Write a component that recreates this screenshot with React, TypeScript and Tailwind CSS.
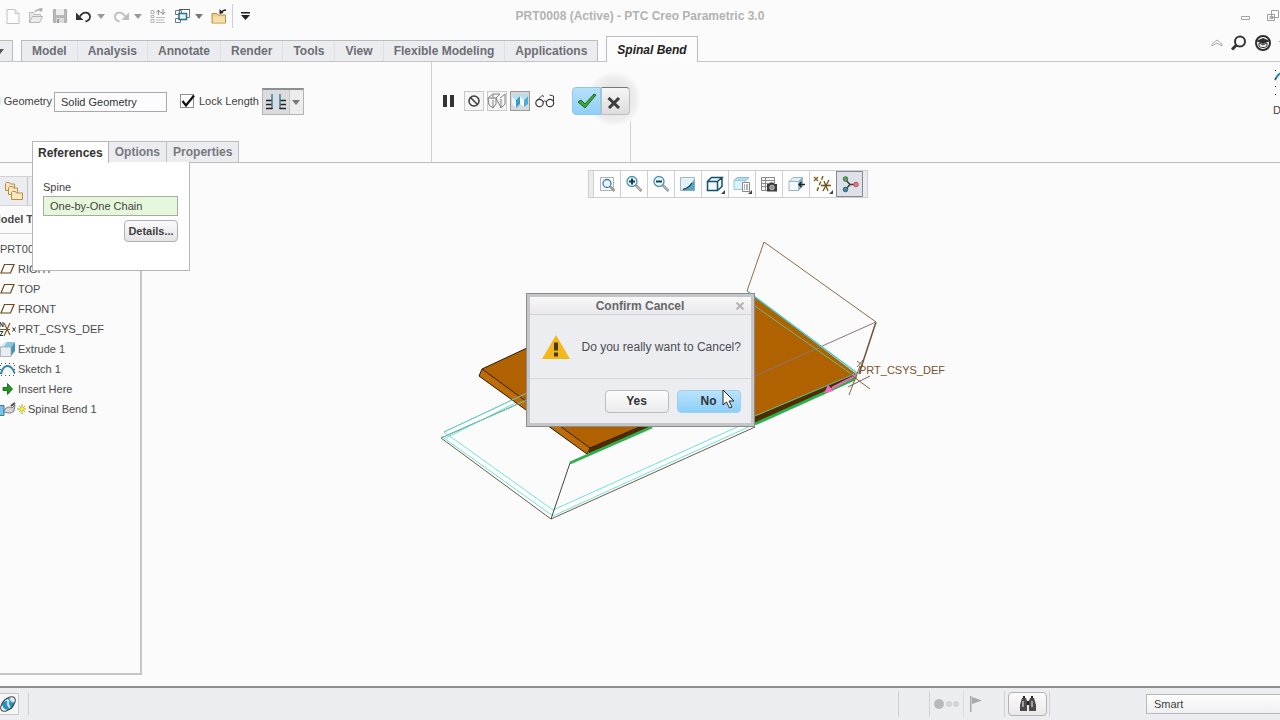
import React from 'react';
import clsx from 'clsx';

const Caret = ({ className = 'text-[#9a9a9a]' }: { className?: string }) => (
  <svg viewBox="0 0 8 5" className={clsx('w-2 h-[5px] shrink-0', className)}>
    <path d="M0 0h8L4 5z" fill="currentColor" />
  </svg>
);

const Icon = ({ children, className = 'w-4 h-4' }: { children: React.ReactNode; className?: string }) => (
  <svg viewBox="0 0 16 16" fill="none" className={clsx('shrink-0', className)}>
    {children}
  </svg>
);

const NewIcon = () => (
  <Icon>
    <path d="M3 1.500h8l4 4v10H3z" fill="#fdfdfd" stroke="#c2c2c2" />
    <path d="M11 1.500v4h4" stroke="#c2c2c2" />
  </Icon>
);

const OpenIcon = () => (
  <Icon>
    <path d="M1.500 14.500v-10h4l1 2h6v2" fill="#e6e6e6" stroke="#bdbdbd" />
    <path d="M1.500 14.500l3-6h10l-3 6z" fill="#ececec" stroke="#b5b5b5" />
    <path d="M7 4c1-2 3-2.500 5-2" stroke="#ababab" strokeWidth="1.500" />
    <path d="M11 0l4 .500-2 4z" fill="#ababab" />
  </Icon>
);

const SaveIcon = () => (
  <Icon>
    <path d="M1.500 1.500h13v13h-13z" fill="#b8b8b8" stroke="#adadad" />
    <path d="M4 1h8v6H4z" fill="#ededed" />
    <path d="M4 10h8v5H4z" fill="#dcdcdc" />
    <path d="M5 11h2v4H5z" fill="#9d9d9d" />
  </Icon>
);

const UndoIcon = ({ redo }: { redo?: boolean }) => (
  <Icon className={clsx('w-4 h-4', redo ? '-scale-x-100 text-[#bdbdbd]' : 'text-[#333]')}>
    <path d="M4 8.500C6.500 3.500 13 3.500 14 8c.500 3-1.500 5-4.500 5.500" stroke="currentColor" strokeWidth="1.800" />
    <path d="M0 4.500v7.500h7.500z" fill="currentColor" />
  </Icon>
);

const RegenIcon = () => (
  <Icon>
    <path d="M1 2.500h3v3H1zM1 7.500h3v2H1zM1 11.500h3v3H1z" stroke="#b5b5b5" />
    <path d="M6 9.500h9M6 12h8M6 14.500h9" stroke="#bcbcbc" />
    <path d="M8.500 7V2.500M6.500 4.500l2-2.500 2 2.500M13 1v5M11 4l2 2.500L15 4" stroke="#8e8e8e" />
  </Icon>
);

const WindowsIcon = () => (
  <Icon>
    <path d="M5.500 1.500h10v8h-10zM1.500 2.500h6v4h-6zM1.500 10.500h5v4h-5z" fill="#fff" stroke="#6b7780" />
    <path d="M5 1.500h11" stroke="#4d5a63" />
    <path d="M5 5.500h7.500v6H5z" fill="#e9f4fa" stroke="#1f7396" strokeWidth="1.500" />
  </Icon>
);

const CloseFolderIcon = () => (
  <Icon>
    <path d="M1 5.500h5l1 1.500h7.500v8H1z" fill="#f0d08a" stroke="#b48f4b" />
    <path d="M2 8.500h12v6H2z" fill="#f8dfa6" />
    <path d="M10.500 4.500c1-2 2.500-2.500 4.500-2.500" stroke="#222" strokeWidth="1.500" />
    <path d="M8.500 1v5l4-1z" fill="#222" />
  </Icon>
);

const FoldersIcon = () => (
  <svg viewBox="0 0 20 20" fill="#fae8bc" stroke="#b48f4b" className="w-5 h-5">
    <path d="M1.500 9.500v-7l1-1h3l1 1.500h4v6.500z" />
    <path d="M4.500 13.500v-7l1-1h3l1 1.500h4v6.500z" />
    <path d="M7.500 18.500v-7l1-1h3l1 1.500h6v6.500z" />
  </svg>
);

const PlaneIcon = () => (
  <Icon>
    <path d="M4.500 3.500H14L10.500 12H1z" stroke="#6b4a1c" strokeWidth="1.200" />
  </Icon>
);

const CsysIcon = () => (
  <Icon>
    <path d="M0 8.500h10M4 2l6 12M10 2L4 15" stroke="#7a5a2a" strokeWidth="1.200" />
    <path d="M0 6V1l3 5V1M0 10.500h3l-3 4h3M12.500 6.500l3 4M15.500 6.500l-3 4" stroke="#333" />
  </Icon>
);

const ExtrudeIcon = () => (
  <Icon>
    <path d="M0 6l5-5h10l-4 5z" fill="#cfe7f4" />
    <path d="M11 6l4-5v9l-4 5z" fill="#3f95bf" />
    <path d="M7 1h8l-4 5H4z" fill="#8cc5df" />
    <path d="M.500 6h10.500v9.500H.500z" fill="#e9eef1" stroke="#9aa7ae" strokeWidth=".800" />
  </Icon>
);

const SketchIcon = () => (
  <Icon>
    <path d="M1 13C3 3 11 2 14.500 12" stroke="#2b84b4" strokeWidth="2" />
    <path d="M1 2.500h14M1 14.500h14M.500 4v10M14.500 4v10" stroke="#555" strokeDasharray="1 3" />
  </Icon>
);

const InsertIcon = () => (
  <Icon>
    <path d="M3 6.500h4.500v-4l5 5.500-5 5.500v-4H3z" fill="#1d9a1d" stroke="#0d5e0d" strokeWidth=".800" />
  </Icon>
);

const BendIcon = () => (
  <svg viewBox="0 0 26 16" fill="none" className="w-[26px] h-4 shrink-0">
    <path d="M0 4.500h4v10H0" fill="#7cc1e4" stroke="#2b7fa8" />
    <path d="M4 11c1-5 5-6 8-4l3-3-1 6c-3 3-6 2-10 1z" fill="#d5d5d5" stroke="#777" />
    <path d="M11 5l4-3" stroke="#444" strokeWidth="2" />
    <path d="M22 3v10M17 8h10M19 5l6 6M25 5l-6 6" stroke="#b3a800" />
    <path d="M20.500 6.500h3v3h-3z" fill="#ffee20" />
  </svg>
);

const ribbonTabs = ['Model', 'Analysis', 'Annotate', 'Render', 'Tools', 'View', 'Flexible Modeling', 'Applications'];

const treeItems = [
  { label: 'RIGHT', icon: <PlaneIcon /> },
  { label: 'TOP', icon: <PlaneIcon /> },
  { label: 'FRONT', icon: <PlaneIcon /> },
  { label: 'PRT_CSYS_DEF', icon: <CsysIcon /> },
  { label: 'Extrude 1', icon: <ExtrudeIcon /> },
  { label: 'Sketch 1', icon: <SketchIcon /> },
  { label: 'Insert Here', icon: <InsertIcon /> },
  { label: 'Spinal Bend 1', icon: <BendIcon /> },
];

const Corner = () => <path d="M20 16v4h-4z" fill="#444" />;

const viewTools = [
  {
    name: 'Refit',
    icon: (
      <>
        <path d="M3.500 3.500h13v13h-13z" stroke="#a9b4ba" />
        <circle cx="10" cy="9.500" r="4" fill="#e8f4fa" stroke="#3b7f9f" strokeWidth="1.300" />
        <path d="M13 12.500l4.500 4.500" stroke="#9a9a9a" strokeWidth="2.500" />
      </>
    ),
  },
  {
    name: 'Zoom In',
    icon: (
      <>
        <circle cx="8" cy="7.500" r="5" fill="#eef7fb" stroke="#4d92b3" strokeWidth="1.300" />
        <path d="M5 7.500h6M8 4.500v6" stroke="#0f3f58" strokeWidth="2" />
        <path d="M12 11.500l5.500 5.500" stroke="#8b8b8b" strokeWidth="2.500" />
        <path d="M12.500 12l4.500 4.500" stroke="#e4e4e4" />
      </>
    ),
  },
  {
    name: 'Zoom Out',
    icon: (
      <>
        <circle cx="8" cy="7.500" r="5" fill="#eef7fb" stroke="#4d92b3" strokeWidth="1.300" />
        <path d="M5 7.500h6" stroke="#0f3f58" strokeWidth="2" />
        <path d="M12 11.500l5.500 5.500" stroke="#8b8b8b" strokeWidth="2.500" />
        <path d="M12.500 12l4.500 4.500" stroke="#e4e4e4" />
      </>
    ),
  },
  {
    name: 'Repaint',
    icon: (
      <>
        <path d="M2.500 3.500h14v13h-14z" fill="#d4e8f2" stroke="#a7b7bf" />
        <path d="M16.500 4v12.500H4c7-2 10-6 12.500-12.500z" fill="#5ba3c2" />
        <path d="M5 15.500c4-1 7-3 9-7" stroke="#173d4e" strokeWidth="1.500" />
        <path d="M3 4h13.500C14 9 10 13 3 15z" fill="#e2f0f7" />
      </>
    ),
  },
  {
    name: 'Display Style',
    icon: (
      <>
        <path d="M2.500 7.500h10v9h-10zM2.500 7.500l4-4h10.500l-4.500 4M17 3.500v9l-4.500 4" fill="#eff8fc" stroke="#17506b" strokeWidth="1.500" />
        <Corner />
      </>
    ),
  },
  {
    name: 'Saved Orientations',
    icon: (
      <>
        <path d="M2 6.500l3-3h12l-3 3z" fill="#b5dcee" stroke="#86bcd4" />
        <path d="M2 6.500h11v9H2z" fill="#dcf0f8" stroke="#9bc8db" />
        <path d="M10.500 8.500h7v9h-7z" fill="#fff" stroke="#888" />
        <path d="M12 11h1M14 11h2M12 13h1M14 13h2M12 15h1M14 15h2" stroke="#666" />
        <Corner />
      </>
    ),
  },
  {
    name: 'View Manager',
    icon: (
      <>
        <path d="M2.500 3.500h13v13h-13zM2.500 6.500h13M2.500 9.500h13M2.500 12.500h6M6.500 3.500v13" fill="#f5f5f5" stroke="#8b8b8b" />
        <path d="M8 10h2l1-1.500h3L15 10h3v7.500H8z" fill="#3c3c3c" />
        <circle cx="13" cy="13.500" r="2.300" fill="#8c8c8c" stroke="#ddd" strokeWidth=".800" />
      </>
    ),
  },
  {
    name: 'Perspective',
    icon: (
      <>
        <path d="M3 7.500l4-4h9.500l-4 4z" fill="#d9edf6" stroke="#9db5c0" />
        <path d="M3 7.500h9.500v9H3z" fill="#f4f8fa" stroke="#9db5c0" />
        <path d="M12.500 7.500l4-4v9l-4 4z" fill="#6fb4d2" stroke="#9db5c0" />
        <path d="M13 10.500h6M15.500 8L13 10.500l2.500 2.500" stroke="#222" strokeWidth="1.300" />
      </>
    ),
  },
  {
    name: 'Datum Display Filters',
    icon: (
      <>
        <path d="M1 3l4 4M5 3L1 7" stroke="#7d6420" strokeWidth="1.300" />
        <path d="M10 2L4 17" stroke="#7d6420" strokeWidth="1.500" strokeDasharray="4 2" />
        <path d="M8 11.500h10M11 7l4 10M16 6l-6 11" stroke="#6d5315" strokeWidth="1.300" />
        <Corner />
      </>
    ),
  },
  {
    name: 'Spin Center',
    active: true,
    icon: (
      <>
        <path d="M5 5l5 5.500h5.500M10 10.500L6 15" stroke="#3e3e3e" strokeWidth="1.500" />
        <circle cx="5.500" cy="5" r="2.300" fill="#5da065" stroke="#3d7745" />
        <circle cx="16" cy="10.500" r="2.300" fill="#e07b7b" stroke="#b94d4d" />
        <circle cx="5.500" cy="15.500" r="2.300" fill="#4c87a5" stroke="#2f637e" />
      </>
    ),
  },
];

function TitleBar() {
  return (
    <header className="grid grid-cols-[1fr_auto_1fr] items-center h-8 shrink-0">
      <div className="flex items-center gap-2 pl-1">
        <NewIcon />
        <OpenIcon />
        <SaveIcon />
        <div className="flex items-center gap-[5px]">
          <UndoIcon />
          <Caret />
        </div>
        <div className="flex items-center gap-[5px]">
          <UndoIcon redo />
          <Caret />
        </div>
        <RegenIcon />
        <div className="flex items-center gap-[5px]">
          <WindowsIcon />
          <Caret className="text-[#777]" />
        </div>
        <div className="flex items-center gap-[5px]">
          <CloseFolderIcon />
          <span className="w-px h-6 bg-[#cfcfcf]" />
        </div>
        <svg viewBox="0 0 9 8" className="w-[9px] h-2 text-[#222]">
          <path d="M0 0h9v1.500H0zM0 3h9L4.500 8z" fill="currentColor" />
        </svg>
      </div>
      <h1 className="text-xs font-bold text-[#b3b3b3]">PRT0008 (Active) - PTC Creo Parametric 3.0</h1>
      <div className="flex items-center justify-end gap-4 pr-px">
        <svg viewBox="0 0 10 4" fill="none" className="w-2.5 h-1 mt-1">
          <path d="M.500 .500h8v3h-8z" stroke="#a5a5a5" />
        </svg>
        <svg viewBox="0 0 12 12" fill="none" className="w-3 h-3">
          <path d="M4.500 .500h7v7h-7zM.500 4.500h7v6h-7zM3 6.500h3v2H3z" stroke="#a0a0a0" />
        </svg>
      </div>
    </header>
  );
}

function RibbonTabs() {
  return (
    <nav className="flex items-end h-[30px] shrink-0 border-b border-[#c3c4c6] text-xs font-bold text-[#6d6e72]">
      <button className="flex items-center w-[13px] h-[21px] border-t border-r border-[#b9bbc0] bg-[#ebecf0]" aria-label="File">
        <Caret className="text-[#555] -ml-1" />
      </button>
      <div className="flex ml-2 h-[21px] border border-b-0 border-[#b9bbc0] bg-[#ebecf0] divide-x divide-[#dfe0e4]">
        {ribbonTabs.map((t) => (
          <button key={t} className="px-2.5 whitespace-nowrap">
            {t}
          </button>
        ))}
      </div>
      <button className="ml-2 -mb-px h-[26px] px-2.5 border border-b-0 border-[#b9bbc0] bg-[#fcfcfc] italic text-[#222] whitespace-nowrap">
        Spinal Bend
      </button>
      <div className="flex items-center gap-2 h-9 ml-auto overflow-hidden">
        <svg viewBox="0 0 12 8" fill="none" className="w-3 h-2">
          <path d="M1 5l5-4 5 4v2L6 4 1 7z" stroke="#aaa" />
        </svg>
        <Icon>
          <circle cx="9" cy="6.500" r="5" stroke="#333" strokeWidth="2" />
          <path d="M5.500 10L1 14.500" stroke="#333" strokeWidth="3" />
        </Icon>
        <Icon>
          <circle cx="8" cy="8" r="7" fill="#fff" stroke="#2d2d2d" strokeWidth="2" />
          <path d="M1 6l7-3 7 3-7 3z" fill="#2d2d2d" />
          <path d="M4 8v3c2 2 6 2 8 0V8L8 10z" fill="#fff" stroke="#2d2d2d" />
        </Icon>
        <Caret className="text-[#666] -mr-[7px]" />
      </div>
    </nav>
  );
}

const smallBtn = 'flex items-center justify-center w-5 h-5 border border-[#c9c9c9] bg-[#f6f6f6]';

function Ribbon() {
  return (
    <section className="flex h-[101px] shrink-0 border-b border-[#bdbdbd] text-[11px] text-[#3f3f3f]">
      <div className="flex flex-col w-[432px] shrink-0 border-r border-[#cfcfcf]">
        <div className="flex items-center h-[79px]">
          <label htmlFor="geom" className="flex justify-end w-[52px] overflow-hidden whitespace-nowrap">
            Solid Geometry
          </label>
          <input
            id="geom"
            defaultValue="Solid Geometry"
            className="ml-0.5 w-[113px] h-5 px-1.5 border border-[#a8a8ae] bg-[#fcfcff] text-[#333]"
          />
          <label className="flex items-center gap-1 ml-[13px] whitespace-nowrap">
            <span className="relative w-[15px] h-[15px]">
              <input type="checkbox" defaultChecked className="appearance-none block w-[14px] h-[14px] border border-[#8f8f8f] bg-white" />
              <svg viewBox="0 0 15 15" fill="none" className="absolute inset-0 pointer-events-none">
                <path d="M2.500 7l3.500 4.500L14 1.500" stroke="#111" strokeWidth="2.300" />
              </svg>
            </span>
            Lock Length
          </label>
          <div className="flex ml-[3px] h-[27px] border border-t-2 border-[#b4b4b4] border-t-[#8f8f8f] bg-[#dcdcde]">
            <button className="flex items-center justify-center w-[26px]" aria-label="Length option">
              <svg viewBox="0 0 20 16" fill="none" className="w-5 h-4">
                <path d="M6 0v15M14 0v15" stroke="#2a80ae" strokeWidth="1.500" />
                <path d="M0 6.500h5.500M0 10.500h5.500M0 14.500h6.500M14.500 6.500H20M14.500 10.500H20M13.500 14.500H20" stroke="#222" strokeWidth="1.500" />
              </svg>
            </button>
            <button className="flex items-center justify-center w-[14px] border-l border-[#c6c6c6] bg-[#ececec]" aria-label="More length options">
              <Caret className="text-[#777]" />
            </button>
          </div>
        </div>
        <div className="flex h-[22px] -mb-px ml-8 text-xs font-bold text-[#77787c]">
          <button className="z-20 px-[5px] border border-b-0 border-[#b5b5b5] bg-white text-[#333]">References</button>
          <button className="px-[6px] border border-l-0 border-[#bdbdbd] bg-[#ebecf0]">Options</button>
          <button className="px-[6px] border border-l-0 border-[#bdbdbd] bg-[#ebecf0]">Properties</button>
        </div>
      </div>

      <div className="flex items-center h-[77px] shrink-0 pl-[11px]">
        <button className="flex gap-[3px] w-3 h-3" aria-label="Pause">
          <span className="w-1 h-3 bg-[#333]" />
          <span className="w-1 h-3 bg-[#333]" />
        </button>
        <div className="flex gap-[3px] ml-[9px]">
          <button className={smallBtn} aria-label="No preview">
            <Icon>
              <circle cx="8" cy="8" r="5" stroke="#3c3c3c" strokeWidth="1.500" />
              <path d="M4.500 4.500l7 7" stroke="#3c3c3c" strokeWidth="1.500" />
            </Icon>
          </button>
          <button className={smallBtn} aria-label="Unattached">
            <svg viewBox="0 0 20 18" fill="none" className="w-5 h-[18px] shrink-0">
              <path d="M1 6l5-4h7l-4 4zM1 6l1 7 4 3 3-4V6M6 8v8M9 6l5 10M13 6l5-4v10l-4 4V7M6 2v5" stroke="#808080" />
            </svg>
          </button>
          <button className="flex items-center justify-center w-5 h-5 border border-[#9a9a9a] bg-[#d6d8da]" aria-label="Attached">
            <svg viewBox="0 0 18 18" className="w-[18px] h-[18px] shrink-0">
              <path d="M1 5l4 3v8l-4-4z" fill="#e8f5fb" />
              <path d="M5 8l4-4v8l-4 4z" fill="#3a9cc8" />
              <path d="M9 4l4 4v7l-4-3z" fill="#f2fafd" />
              <path d="M13 8l4-4v8l-4 3z" fill="#4fabd3" />
              <path d="M1 5l3-3h5v2L5 8zM9 4l2-2h6v2l-4 4z" fill="#b9deef" />
            </svg>
          </button>
        </div>
        <button className="ml-[5px]" aria-label="Verify">
          <svg viewBox="0 0 20 14" fill="none" className="w-5 h-3.5">
            <circle cx="4.500" cy="9" r="3.700" stroke="#3a3a3a" strokeWidth="1.200" />
            <circle cx="15" cy="9" r="3.700" stroke="#3a3a3a" strokeWidth="1.200" />
            <path d="M8 8c1-1.500 2.500-1.500 3.500 0M1.500 7L7 1.500l2 1M18.500 7V2l-4-1" stroke="#3a3a3a" />
          </svg>
        </button>
        <div className="relative flex ml-[17px]">
          <div className="absolute -right-3 -top-4 w-14 h-14 rounded-full bg-[radial-gradient(circle,#d8d8d8_0%,#eeeeee_55%,#fbfbfb_70%)]" />
          <button className="relative flex items-center justify-center w-[29px] h-7 rounded-l-sm border border-[#8cc8ec] bg-linear-to-b from-[#b6e0fa] to-[#8fd0f8]" aria-label="OK">
            <svg viewBox="0 0 20 16" className="w-5 h-4">
              <path d="M1 9l3-2 4 4 9-10 2 1L8 15z" fill="#3fa535" stroke="#1f6b1c" />
            </svg>
          </button>
          <button className="relative flex items-center justify-center w-[29px] h-7 rounded-r-sm border border-[#bdbdbd] border-t-[#777] bg-linear-to-b from-[#f6f6f6] to-[#dcdcdc] pr-1 pt-1" aria-label="Cancel">
            <svg viewBox="0 0 14 12" fill="none" className="w-3.5 h-3">
              <path d="M1.500 1l10.500 10M12 1L2 11" stroke="#3c3c3c" strokeWidth="3" />
            </svg>
          </button>
        </div>
      </div>
      <div className="flex items-end w-0.5">
        <span className="w-px h-[54px] bg-[#cfcfcf]" />
      </div>

      <div className="flex flex-col ml-auto w-[7px] overflow-hidden pt-2">
        <svg viewBox="0 0 16 28" fill="none" className="w-4 h-7">
          <path d="M2 10c3-7 7-9 14-6" stroke="#2b84b4" strokeWidth="2" />
          <path d="M2.500 0v28" stroke="#222" strokeDasharray="1 7" />
        </svg>
        <span className="mt-1">Datum</span>
      </div>
    </section>
  );
}

function ReferencesPanel() {
  return (
    <div className="absolute left-8 -top-px z-10 w-[158px] h-[109px] pl-2.5 pr-[11px] pt-[18px] border border-[#b5b5b5] border-t-0 bg-white text-[11px] text-[#3f3f3f]">
      <label htmlFor="spine" className="block leading-[15px]">
        Spine
      </label>
      <input
        id="spine"
        defaultValue="One-by-One Chain"
        className="block w-full h-5 mt-px px-1.5 border border-[#a9aaa5] bg-[#e6f8dc]"
      />
      <button className="block ml-auto mt-1 w-[54px] h-[22px] rounded-sm border border-[#b0b0b0] bg-linear-to-b from-[#fafafa] to-[#e4e4e6] font-bold">
        Details...
      </button>
    </div>
  );
}

function ModelTree() {
  return (
    <aside className="flex flex-col w-[142px] shrink-0 mt-[13px] mb-[11px] border-r-2 border-b-2 border-[#c6c6c8] text-[11px] text-[#4a4a4a]">
      <div className="flex h-[30px] shrink-0 border-y border-[#d2d2d6] bg-[#ebecf0]">
        <button className="flex items-center justify-center w-7 border-r border-[#c4c4cc]" aria-label="Folder browser">
          <FoldersIcon />
        </button>
      </div>
      <div className="flex items-center h-[28px] shrink-0 border-b border-[#d0d0d0]">
        <span className="flex justify-end w-[49px] overflow-hidden whitespace-nowrap font-bold">Model Tree</span>
      </div>
      <ul className="pt-[5px]">
        <li className="h-5 leading-5">PRT0008.PRT</li>
        {treeItems.map((item) => (
          <li key={item.label} className="flex items-center gap-0.5 h-5 whitespace-nowrap">
            {item.icon}
            {item.label}
          </li>
        ))}
      </ul>
    </aside>
  );
}

function ViewToolbar() {
  return (
    <div className="absolute left-[588px] top-[7px] flex h-7 px-1 border border-[#cfcfd2] bg-[#ebecf0]">
      {viewTools.map((t) => (
        <button
          key={t.name}
          aria-label={t.name}
          className={clsx(
            'flex items-center justify-center w-[27px]',
            t.active ? 'bg-[#dfe1ea] border border-[#85868e]' : 'bg-[#fdfdfd] border-l border-[#cfcfd2]'
          )}
        >
          <svg viewBox="0 0 20 20" fill="none" className="w-5 h-5">
            {t.icon}
          </svg>
        </button>
      ))}
    </div>
  );
}

function ModelView() {
  return (
    <svg viewBox="430 230 530 300" fill="none" className="absolute left-[430px] top-[67px] w-[530px] h-[300px]">
      {/* ghost of the straight sheet */}
      <path d="M446 431L527 393V400L455 434L553 509L755 420V426L551 519L441 438z" fill="#fff" />
      <path d="M441 438L527 400M441 438L551 519L755 427" stroke="#6e5a45" />
      <path d="M444 432L553 510L755 419M444 432L527 393M446 438L527 397M441 436L553 516L755 424" stroke="#6fe0e0" />

      {/* bent solid */}
      <path d="M482 369L527 348L640 300L740 300L749 292L855 373L755 416L642 426L590 448z" fill="#b06200" />
      <path d="M590 448L642 426L650 427L588 454z" fill="#4e2c04" />
      <path d="M482 369L479 376L587 454L590 448z" fill="#bd6c08" />
      <path d="M755 416L855 373L857 378L755 423z" fill="#4e2c04" />
      <path d="M527 348L482 369L479 376L587 454L590 448L482 369M590 448L642 426" stroke="#2a1a05" />
      <path d="M441 438L527 400M444 432L527 393" stroke="#6fc9b8" />
      <path d="M570 463L652 427M755 424L855 379" stroke="#2fb04f" strokeWidth="3" />
      <path d="M570 463L551 519" stroke="#444" />

      {/* datum planes */}
      <path d="M747 291L764 242L876 322" stroke="#8a6d4b" />
      <path d="M876 322L859 374" stroke="#6b5238" strokeWidth="1.500" />
      <path d="M876 322L755 376" stroke="#85787a" />
      <path d="M747 291L857 373" stroke="#3cc9c4" strokeWidth="1.500" />
      <path d="M755 306L857 378M755 416L857 373" stroke="#5fc08c" />

      {/* csys and start arrow */}
      <path d="M857 375L832 388" stroke="#f06cc0" strokeWidth="2" />
      <path d="M824 393L828 385L834 391z" fill="#f06cc0" />
      <path d="M848 387L870 376M850 374L870 389M860 366L849 395M857 361L863 366M863 360L857 367" stroke="#7b6247" />
      <text x="859" y="374" fontSize="11" fill="#74532f">
        PRT_CSYS_DEF
      </text>
    </svg>
  );
}

function ConfirmDialog() {
  return (
    <div className="fixed inset-0 z-30 flex items-center justify-center">
      <div role="dialog" aria-labelledby="dlg-title" className="w-[229px] border border-[#8c8c8e] bg-[#c6c6c8] p-[3px] text-xs">
        <div className="bg-[#ecedf0]">
          <div className="relative flex items-center justify-center h-[18px] border-b border-[#d3d3d6] bg-linear-to-b from-[#f8f8f8] to-[#e9e9ec]">
            <h2 id="dlg-title" className="font-bold text-[#66676b]">
              Confirm Cancel
            </h2>
            <button className="absolute right-[7px] top-[5px]" aria-label="Close">
              <svg viewBox="0 0 8 8" fill="none" className="w-2 h-2">
                <path d="M.500 .500l7 7M7.500 .500l-7 7" stroke="#b4b4b6" strokeWidth="2" />
              </svg>
            </button>
          </div>
          <div className="flex items-center gap-3 h-[64px] pl-3 border-b border-[#d8d8dc] text-[#4a4b50] whitespace-nowrap">
            <svg viewBox="0 0 28 24" className="w-7 h-6 shrink-0">
              <path d="M14 0l14 24H0z" fill="#f2b91d" />
              <path d="M12 7.500h4v8h-4zM12 17.500h4v4h-4z" fill="#4a3a12" />
            </svg>
            Do you really want to Cancel?
          </div>
          <div className="flex items-center justify-end gap-2 h-11 pr-2.5 font-bold text-[#333]">
            <button className="w-16 h-[23px] rounded-sm border border-[#bcbcbf] bg-linear-to-b from-[#fdfdfd] to-[#ebebed]">Yes</button>
            <button className="relative w-16 h-[23px] rounded-sm border border-[#a3cfe9] bg-linear-to-b from-[#b9e2fc] to-[#8ccffa]">
              No
              <svg viewBox="0 0 13 20" className="absolute left-11 -top-0.5 w-[13px] h-5">
                <path d="M1 1v15l3.500-3 3 6 2.500-1-3-6h5z" fill="#fff" stroke="#222" />
              </svg>
            </button>
          </div>
        </div>
      </div>
    </div>
  );
}

function StatusBar() {
  return (
    <footer className="flex items-center h-[34px] shrink-0 border-t-2 border-[#8f8f8f] bg-[#ecedf0] text-[11px] text-[#3f3f3f]">
      <button className="flex items-center w-[19px] h-[22px] border border-l-0 border-[#c9c9cc] bg-[#f7f7f9]" aria-label="Browser">
        <Icon>
          <circle cx="8" cy="8" r="6" fill="#2f8fc0" />
          <path d="M4 5c3-2 5-1 4 2s3 3 1 5M10 3l3 3" stroke="#c8e8f5" strokeWidth="2" />
          <ellipse cx="8" cy="8" rx="9" ry="5" transform="rotate(-45 8 8)" stroke="#38464d" />
        </Icon>
      </button>
      <span className="w-px h-[22px] ml-[9px] bg-[#d0d0d4]" />
      <div className="flex items-center h-[26px] ml-auto">
        <span className="w-[31px] h-full border-l border-[#d0d0d4]" />
        <span className="flex items-center justify-center w-[34px] h-full border-l border-[#d0d0d4]">
          <svg viewBox="0 0 25 10" className="w-[25px] h-2.5">
            <circle cx="5" cy="5" r="5" fill="#b9b9bc" />
            <circle cx="15" cy="5" r="3" fill="#d3d3d7" />
            <circle cx="22" cy="5" r="3" fill="#d3d3d7" />
          </svg>
        </span>
        <span className="flex items-center w-[41px] h-full pl-1.5 border-l border-[#dcdce0]">
          <svg viewBox="0 0 12 16" className="w-3 h-4">
            <path d="M0 0h1.500v16H0zM2 1l10 3.500L2 8z" fill="#a9a9ac" />
          </svg>
        </span>
        <span className="flex items-center w-[46px] h-full pl-[3px] border-x border-[#d0d0d4]">
          <button className="flex items-center justify-center w-[39px] h-6 rounded-sm border border-[#b2b2b6] bg-linear-to-b from-[#fbfbfb] to-[#e9e9eb]" aria-label="Search">
            <svg viewBox="0 0 18 16" className="w-[18px] h-4">
              <path d="M3 2h4l1 3v10H1V9zM15 2h-4l-1 3v10h7V9z" fill="#4a4a4a" />
              <path d="M3 5h2v6H3zM12 5h2v6h-2z" fill="#a3a3a3" />
              <path d="M4 0h2v2H4zM12 0h2v2h-2zM8 5h2v4H8z" fill="#222" />
            </svg>
          </button>
        </span>
      </div>
      <select
        aria-label="Selection filter"
        className="appearance-none ml-24 w-[134px] h-5 pl-[7px] border border-r-0 border-[#b8b8bc] bg-linear-to-b from-[#fefefe] to-[#f0f0f2]"
      >
        <option>Smart</option>
      </select>
    </footer>
  );
}

export default function App() {
  return (
    <div className="flex flex-col min-h-screen overflow-hidden bg-[#fbfbfb] font-['Liberation_Sans',Arial,sans-serif]">
      <TitleBar />
      <RibbonTabs />
      <Ribbon />
      <main className="relative flex flex-1">
        <ModelTree />
        <ReferencesPanel />
        <ModelView />
        <ViewToolbar />
      </main>
      <StatusBar />
      <ConfirmDialog />
    </div>
  );
}
